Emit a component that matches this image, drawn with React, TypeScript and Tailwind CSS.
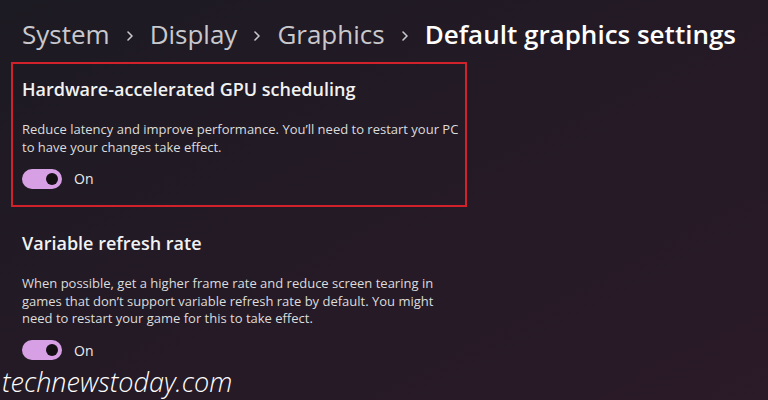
import React from 'react'

const font = { fontFamily: '"Open Sans", "Noto Sans", sans-serif' }

function Chevron() {
  return (
    <svg width="10" height="12" viewBox="0 0 10 12" fill="none" className="mx-[15px] mt-1">
      <path d="M3 2l4 4-4 4" stroke="currentColor" strokeWidth="1.6" strokeLinecap="round" strokeLinejoin="round" />
    </svg>
  )
}

function Toggle() {
  return (
    <div className="flex items-center gap-3">
      <div className="w-10 h-5 rounded-full bg-[#d7a0e4] flex items-center justify-end pr-1">
        <div className="w-3 h-3 rounded-full bg-[#141014]" />
      </div>
      <span className="text-[14px] text-[#ececec]">On</span>
    </div>
  )
}

type Setting = { title: string; lines: string[] }

function SettingBlock({ s }: { s: Setting }) {
  return (
    <div className="flex flex-col">
      <div className="text-[18px] font-semibold text-[#f2f2f2] leading-6">{s.title}</div>
      <div className="mt-[20px] text-[13px] leading-[17.5px] text-[#dcdcdc]">
        {s.lines.map(l => <div key={l}>{l}</div>)}
      </div>
      <div className="mt-[12px]"><Toggle /></div>
    </div>
  )
}

export default function App() {
  return (
    <div className="w-[768px] h-[400px] overflow-hidden bg-gradient-to-br from-[#1c1a22] via-[#241a26] to-[#2b1a28] relative" style={font}>
      <div className="flex items-center pl-[22px] pt-[16px] text-[26px] leading-9 text-[#c9c8cd]">
        <span>System</span>
        <Chevron />
        <span>Display</span>
        <Chevron />
        <span>Graphics</span>
        <Chevron />
        <span className="font-semibold text-white">Default graphics settings</span>
      </div>

      <div className="ml-[11px] mt-[10px] w-[456px] h-[145px] border-2 border-[#d1222c] pl-[9px] pt-[13px]">
        <SettingBlock s={{
          title: 'Hardware-accelerated GPU scheduling',
          lines: [
            'Reduce latency and improve performance. You\u2019ll need to restart your PC',
            'to have your changes take effect.',
          ],
        }} />
      </div>

      <div className="pl-[22px] pt-[24px]">
        <SettingBlock s={{
          title: 'Variable refresh rate',
          lines: [
            'When possible, get a higher frame rate and reduce screen tearing in',
            'games that don\u2019t support variable refresh rate by default. You might',
            'need to restart your game for this to take effect.',
          ],
        }} />
      </div>

      <div className="absolute left-[2px] bottom-[4px] text-[27px] italic text-white leading-[28px] pr-1" style={{ fontFamily: '"Open Sans", sans-serif', fontWeight: 300 }}>
        technewstoday.com
      </div>
    </div>
  )
}
